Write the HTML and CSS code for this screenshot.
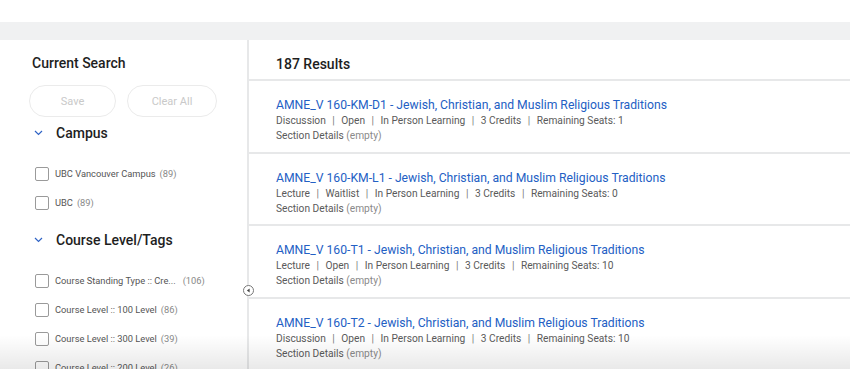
FILE: index.html
```html
<!DOCTYPE html>
<html>
<head>
<meta charset="utf-8">
<link rel="stylesheet" href="styles.css">
</head>
<body>
<div class="topbar"></div>
<div class="band"></div>
<div class="main">
  <aside class="sidebar">
    <h2 class="side-title">Current Search</h2>
    <div class="btns">
      <button class="pill save">Save</button>
      <button class="pill clear">Clear All</button>
    </div>
    <div class="facet">
      <div class="facet-header"><span class="chev"><svg width="9" height="6" viewBox="0 0 9 6"><path d="M1 1l3.5 3.5L8 1" fill="none" stroke="#2f63c5" stroke-width="1.2"/></svg></span><span>Campus</span></div>
      <ul class="facet-list">
        <li><span class="cb"></span><span class="lbl">UBC Vancouver Campus</span><span class="cnt">(89)</span></li>
        <li><span class="cb"></span><span class="lbl">UBC</span><span class="cnt">(89)</span></li>
      </ul>
    </div>
    <div class="facet">
      <div class="facet-header"><span class="chev"><svg width="9" height="6" viewBox="0 0 9 6"><path d="M1 1l3.5 3.5L8 1" fill="none" stroke="#2f63c5" stroke-width="1.2"/></svg></span><span>Course Level/Tags</span></div>
      <ul class="facet-list">
        <li><span class="cb"></span><span class="lbl">Course Standing Type :: Cre...</span><span class="cnt wide">(106)</span></li>
        <li><span class="cb"></span><span class="lbl">Course Level :: 100 Level</span><span class="cnt">(86)</span></li>
        <li><span class="cb"></span><span class="lbl">Course Level :: 300 Level</span><span class="cnt">(39)</span></li>
        <li><span class="cb"></span><span class="lbl">Course Level :: 200 Level</span><span class="cnt">(26)</span></li>
      </ul>
    </div>
    <span class="collapse"><svg width="11" height="11" viewBox="0 0 11 11"><circle cx="5.5" cy="5.5" r="5" fill="#fff" stroke="#777" stroke-width="1"/><path d="M6.6 3.6v3.8L3.9 5.5z" fill="#444"/></svg></span>
  </aside>
  <section class="results">
    <h2 class="res-title">187 Results</h2>
    <div class="item">
      <a class="course">AMNE_V 160-KM-D1 - Jewish, Christian, and Muslim Religious Traditions</a>
      <div class="meta"><span>Discussion</span><span class="sep">|</span><span>Open</span><span class="sep">|</span><span>In Person Learning</span><span class="sep">|</span><span>3 Credits</span><span class="sep">|</span><span>Remaining Seats: 1</span></div>
      <div class="details">Section Details <span class="empty">(empty)</span></div>
    </div>
    <div class="item">
      <a class="course">AMNE_V 160-KM-L1 - Jewish, Christian, and Muslim Religious Traditions</a>
      <div class="meta"><span>Lecture</span><span class="sep">|</span><span>Waitlist</span><span class="sep">|</span><span>In Person Learning</span><span class="sep">|</span><span>3 Credits</span><span class="sep">|</span><span>Remaining Seats: 0</span></div>
      <div class="details">Section Details <span class="empty">(empty)</span></div>
    </div>
    <div class="item">
      <a class="course">AMNE_V 160-T1 - Jewish, Christian, and Muslim Religious Traditions</a>
      <div class="meta"><span>Lecture</span><span class="sep">|</span><span>Open</span><span class="sep">|</span><span>In Person Learning</span><span class="sep">|</span><span>3 Credits</span><span class="sep">|</span><span>Remaining Seats: 10</span></div>
      <div class="details">Section Details <span class="empty">(empty)</span></div>
    </div>
    <div class="item">
      <a class="course">AMNE_V 160-T2 - Jewish, Christian, and Muslim Religious Traditions</a>
      <div class="meta"><span>Discussion</span><span class="sep">|</span><span>Open</span><span class="sep">|</span><span>In Person Learning</span><span class="sep">|</span><span>3 Credits</span><span class="sep">|</span><span>Remaining Seats: 10</span></div>
      <div class="details">Section Details <span class="empty">(empty)</span></div>
    </div>
  </section>
</div>
<div class="fade"></div>
</body>
</html>
```

FILE: styles.css
```css
* { box-sizing: border-box; }
html, body { margin: 0; padding: 0; }
body {
  width: 850px;
  height: 369px;
  overflow: hidden;
  position: relative;
  background: #fff;
  font-family: Roboto, "Liberation Sans", Arial, sans-serif;
  color: #222;
}
.topbar { height: 22px; background: #fff; }
.band { height: 18px; background: #f0f1f2; }
.main { display: flex; height: 329px; }
.sidebar {
  width: 249px;
  flex: none;
  border-right: 2px solid #e7e8e9;
  padding-left: 32px;
  position: relative;
}
.side-title, .res-title {
  margin: 0;
  font-size: 14px;
  font-weight: 500;
  line-height: 16px;
  color: #1e1e1e;
  padding-top: 15px;
}
.btns { display: flex; gap: 11px; margin-left: -3px; margin-top: 14px; }
.pill {
  height: 32px;
  border: 1px solid #ebebeb;
  border-radius: 16px;
  background: #fff;
  color: #c9c9c9;
  font-family: Roboto, "Liberation Sans", Arial, sans-serif;
  font-size: 11px;
  padding: 0;
}
.save { width: 87px; }
.clear { width: 90px; }
.facet-header {
  display: flex;
  align-items: center;
  height: 20px;
  margin-top: 6px;
  font-size: 14px;
  font-weight: 500;
  color: #1e1e1e;
}
.chev { width: 24px; display: flex; align-items: center; padding-left: 2px; }
.facet-list { list-style: none; margin: 16px 0 13px 0; padding: 0; }
.facet-list li {
  display: flex;
  align-items: center;
  height: 29px;
  font-size: 9.3px;
  color: #555;
}
.cb {
  width: 14px;
  height: 14px;
  border: 1px solid #9a9a9a;
  border-radius: 2px;
  margin-left: 3px;
  margin-right: 6px;
  background: #fff;
}
.cnt { margin-left: 4px; color: #888; }
.cnt.wide { margin-left: 7px; }
.facet + .facet .facet-header { margin-top: 0; }
.collapse {
  position: absolute;
  right: -7px;
  top: 245px;
  width: 11px;
  height: 11px;
  display: block;
}
.collapse svg { display: block; }
.results { flex: 1; }
.res-title {
  padding-left: 27px;
  padding-top: 16px;
  height: 41px;
  border-bottom: 2px solid #e7e8e9;
}
.item {
  padding: 16px 0 8.67px 27px;
  border-bottom: 2px solid #e7e8e9;
}
.course {
  display: block;
  font-size: 12.2px;
  line-height: 16px;
  color: #2360c4;
}
.meta, .details {
  font-size: 10.2px;
  line-height: 15px;
  color: #5a5a5a;
}
.sep { margin: 0 6.5px; color: #777; }
.empty { color: #8a8a8a; }
.fade {
  position: absolute;
  left: 0;
  right: 0;
  bottom: 0;
  height: 34px;
  background: linear-gradient(rgba(0,0,0,0), rgba(0,0,0,0.085));
  pointer-events: none;
}
```
